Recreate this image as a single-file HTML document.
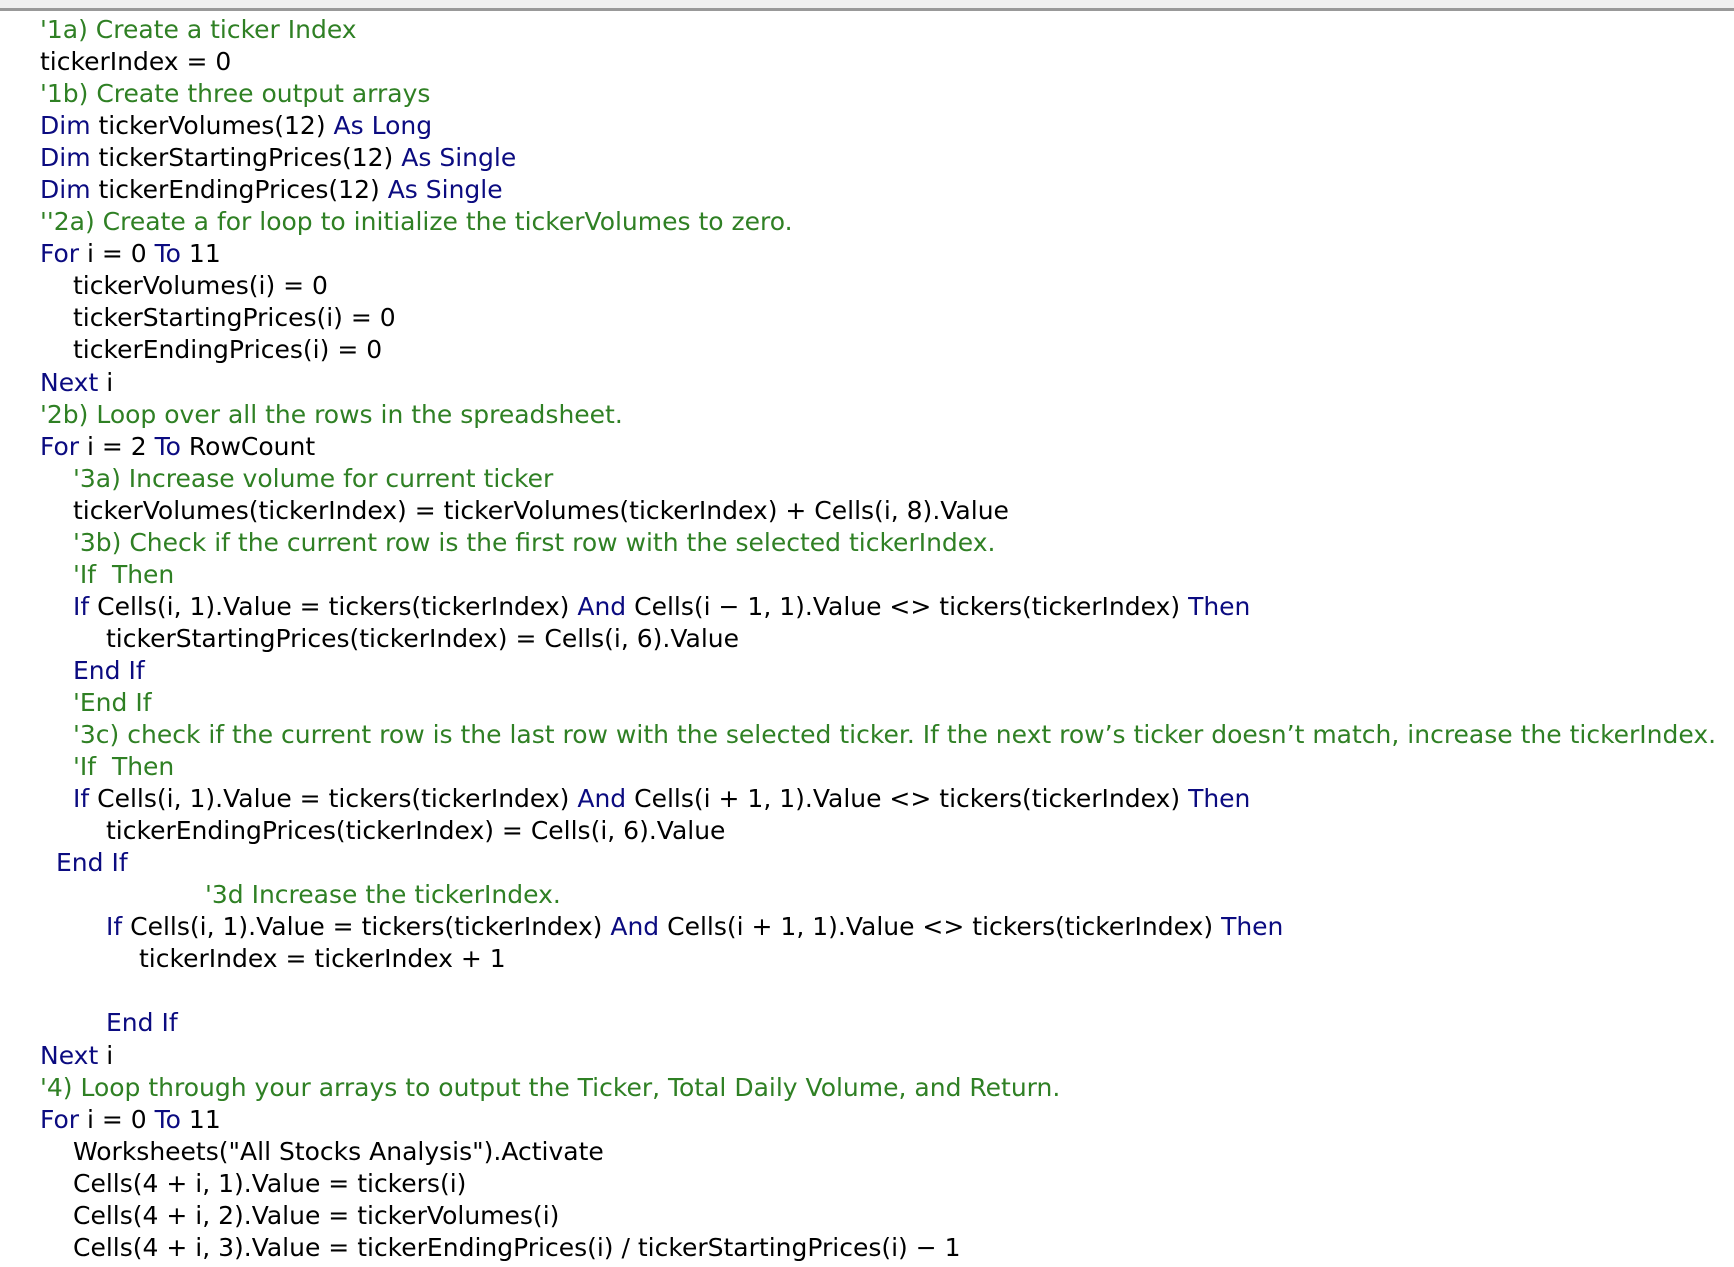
<!DOCTYPE html>
<html><head><meta charset="utf-8"><style>
html,body{margin:0;padding:0;background:#fff;width:1734px;height:1267px;overflow:hidden}
.top{position:absolute;left:0;top:0;width:1734px;height:8px;background:#f0f0f0;border-bottom:3px solid #999}
.c{position:absolute;left:0;top:14px;font-family:"DejaVu Sans","Liberation Sans",sans-serif;font-size:25px;line-height:32.05px;color:#000}
.l{height:32.05px;white-space:pre}
.g{color:#2f8024}.b{color:#0b0b80}
</style></head><body>
<div class="top"></div>
<div class="c"><div class="l" style="padding-left:40px"><span class="g">'1a) Create a ticker Index</span></div><div class="l" style="padding-left:40px">tickerIndex = 0</div><div class="l" style="padding-left:40px"><span class="g">'1b) Create three output arrays</span></div><div class="l" style="padding-left:40px"><span class="b">Dim</span> tickerVolumes(12) <span class="b">As Long</span></div><div class="l" style="padding-left:40px"><span class="b">Dim</span> tickerStartingPrices(12) <span class="b">As Single</span></div><div class="l" style="padding-left:40px"><span class="b">Dim</span> tickerEndingPrices(12) <span class="b">As Single</span></div><div class="l" style="padding-left:40px"><span class="g">''2a) Create a for loop to initialize the tickerVolumes to zero.</span></div><div class="l" style="padding-left:40px"><span class="b">For</span> i = 0 <span class="b">To</span> 11</div><div class="l" style="padding-left:73px">tickerVolumes(i) = 0</div><div class="l" style="padding-left:73px">tickerStartingPrices(i) = 0</div><div class="l" style="padding-left:73px">tickerEndingPrices(i) = 0</div><div class="l" style="padding-left:40px"><span class="b">Next</span> i</div><div class="l" style="padding-left:40px"><span class="g">'2b) Loop over all the rows in the spreadsheet.</span></div><div class="l" style="padding-left:40px"><span class="b">For</span> i = 2 <span class="b">To</span> RowCount</div><div class="l" style="padding-left:73px"><span class="g">'3a) Increase volume for current ticker</span></div><div class="l" style="padding-left:73px">tickerVolumes(tickerIndex) = tickerVolumes(tickerIndex) + Cells(i, 8).Value</div><div class="l" style="padding-left:73px"><span class="g">'3b) Check if the current row is the first row with the selected tickerIndex.</span></div><div class="l" style="padding-left:73px"><span class="g">'If  Then</span></div><div class="l" style="padding-left:73px"><span class="b">If</span> Cells(i, 1).Value = tickers(tickerIndex) <span class="b">And</span> Cells(i − 1, 1).Value &lt;&gt; tickers(tickerIndex) <span class="b">Then</span></div><div class="l" style="padding-left:106px">tickerStartingPrices(tickerIndex) = Cells(i, 6).Value</div><div class="l" style="padding-left:73px"><span class="b">End If</span></div><div class="l" style="padding-left:73px"><span class="g">'End If</span></div><div class="l" style="padding-left:73px"><span class="g">'3c) check if the current row is the last row with the selected ticker. If the next row’s ticker doesn’t match, increase the tickerIndex.</span></div><div class="l" style="padding-left:73px"><span class="g">'If  Then</span></div><div class="l" style="padding-left:73px"><span class="b">If</span> Cells(i, 1).Value = tickers(tickerIndex) <span class="b">And</span> Cells(i + 1, 1).Value &lt;&gt; tickers(tickerIndex) <span class="b">Then</span></div><div class="l" style="padding-left:106px">tickerEndingPrices(tickerIndex) = Cells(i, 6).Value</div><div class="l" style="padding-left:56px"><span class="b">End If</span></div><div class="l" style="padding-left:205px"><span class="g">'3d Increase the tickerIndex.</span></div><div class="l" style="padding-left:106px"><span class="b">If</span> Cells(i, 1).Value = tickers(tickerIndex) <span class="b">And</span> Cells(i + 1, 1).Value &lt;&gt; tickers(tickerIndex) <span class="b">Then</span></div><div class="l" style="padding-left:139px">tickerIndex = tickerIndex + 1</div><div class="l"></div><div class="l" style="padding-left:106px"><span class="b">End If</span></div><div class="l" style="padding-left:40px"><span class="b">Next</span> i</div><div class="l" style="padding-left:40px"><span class="g">'4) Loop through your arrays to output the Ticker, Total Daily Volume, and Return.</span></div><div class="l" style="padding-left:40px"><span class="b">For</span> i = 0 <span class="b">To</span> 11</div><div class="l" style="padding-left:73px">Worksheets("All Stocks Analysis").Activate</div><div class="l" style="padding-left:73px">Cells(4 + i, 1).Value = tickers(i)</div><div class="l" style="padding-left:73px">Cells(4 + i, 2).Value = tickerVolumes(i)</div><div class="l" style="padding-left:73px">Cells(4 + i, 3).Value = tickerEndingPrices(i) / tickerStartingPrices(i) − 1</div></div>
</body></html>
